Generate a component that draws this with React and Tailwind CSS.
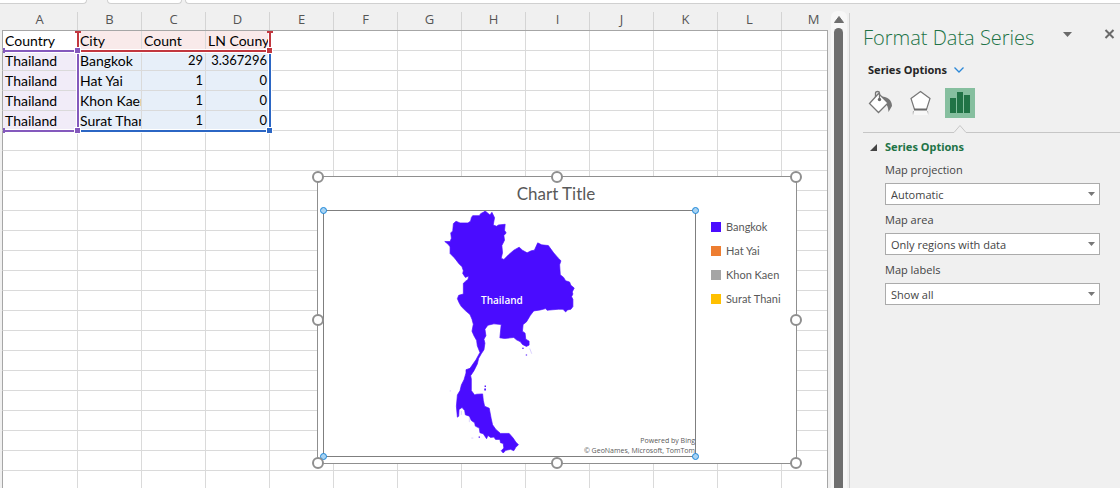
import React, { useState } from 'react';

const COLUMNS = ['A', 'B', 'C', 'D', 'E', 'F', 'G', 'H', 'I', 'J', 'K', 'L', 'M'];
const ROW_COUNT = 23;

const DATA = [
  ['Country', 'City', 'Count', 'LN Counyt'],
  ['Thailand', 'Bangkok', 29, 3.367296],
  ['Thailand', 'Hat Yai', 1, 0],
  ['Thailand', 'Khon Kaen', 1, 0],
  ['Thailand', 'Surat Thani', 1, 0],
];

const LEGEND = [
  { name: 'Bangkok', color: 'bg-[#4a0cff]' },
  { name: 'Hat Yai', color: 'bg-[#ed7d31]' },
  { name: 'Khon Kaen', color: 'bg-[#a5a5a5]' },
  { name: 'Surat Thani', color: 'bg-[#ffc000]' },
];

const FIELDS = [
  { id: 'projection', label: 'Map projection', options: ['Automatic', 'Mercator', 'Miller', 'Robinson'] },
  { id: 'area', label: 'Map area', options: ['Only regions with data', 'Automatic', 'World'] },
  { id: 'labels', label: 'Map labels', options: ['Show all', 'Best fit only', 'None'] },
];

const THAILAND =
  'M150 42 L146 48 126 48 122 54 120 64 112 70 88 70 76 65 68 72 66 94 60 100 62 116 58 126 42 126 52 134 58 142 58 162 72 176 84 192 94 202 98 214 96 222 104 234 114 230 112 240 104 246 98 252 98 284 84 288 80 298 86 312 92 322 104 334 118 346 124 360 128 375 124 396 130 410 138 424 140 440 148 460 136 482 118 508 106 512 106 522 100 542 92 558 88 575 80 588 77 622 80 655 84 652 85 632 94 626 102 635 104 648 116 652 122 665 132 672 134 682 146 688 148 702 158 705 168 720 172 710 180 716 190 715 195 722 208 722 210 732 218 734 220 748 212 756 218 763 226 755 240 752 250 756 256 746 264 738 256 730 248 718 236 704 210 704 196 692 186 678 182 660 176 628 162 622 158 604 156 585 138 586 132 588 122 575 122 540 120 530 130 515 140 495 144 478 152 464 160 452 163 432 160 420 166 410 163 390 172 378 190 374 212 376 208 416 222 418 250 415 258 422 270 428 276 436 288 442 296 438 296 426 286 420 284 402 276 396 278 376 288 368 300 348 310 335 330 332 346 328 350 333 384 330 398 330 406 338 412 332 422 330 428 322 428 300 424 292 428 284 426 278 432 266 422 258 418 248 406 244 400 234 390 226 388 196 392 184 384 176 370 160 354 138 334 136 322 130 312 152 302 154 290 160 276 152 266 143 250 152 234 166 220 180 212 176 216 160 214 138 222 122 220 108 227 100 222 92 224 74 204 76 198 80 188 76 192 54 184 38 178 46 164 34 158 38Z';

function cellColor(row, col) {
  if (row > 4 || col > 3) return 'bg-white';
  if (col === 0) return row === 0 ? 'bg-white' : 'bg-[#f1ecf8]';
  return row === 0 ? 'bg-[#f9eaea]' : 'bg-[#e7eff9]';
}

function SelectedRanges() {
  return (
    <svg className="pointer-events-none absolute left-0 top-[27px]" width="275" height="105" fill="none" aria-hidden="true">
      <g stroke="#fff" strokeWidth="4">
        <path d="M1 20H268M76 0V100M268 0V100M1 100H268" />
      </g>
      <g strokeWidth="2">
        <path d="M76 1V20M268 1V20M76 20H268" stroke="#c2373f" />
        <path d="M76 100H268V20" stroke="#2b66c4" />
        <path d="M1 20H76V100H1" stroke="#8459bd" />
      </g>
      <path d="M73 0h6v2h-6zM265 0h6v2h-6z" fill="#c2373f" />
      <path d="M1 17h2v5H1zM1 97h2v5H1z" fill="#8459bd" />
      <g stroke="#fff">
        <rect x="72.5" y="16.5" width="6" height="6" fill="#8459bd" />
        <rect x="72.5" y="96.5" width="6" height="6" fill="#8459bd" />
        <rect x="264.5" y="16.5" width="6" height="6" fill="#c2373f" />
        <rect x="264.5" y="96.5" width="6" height="6" fill="#2b66c4" />
      </g>
    </svg>
  );
}

function Handle({ className }) {
  return <span className={`absolute h-3 w-3 rounded-full border-2 border-[#8f8f8f] bg-white ${className}`} />;
}

function PlotHandle({ className }) {
  return <span className={`absolute h-[7px] w-[7px] rounded-full border border-[#1a86d9] bg-[#a9d3f2] ${className}`} />;
}

function MapChart() {
  return (
    <div className="absolute left-[315px] top-[172px] h-[288px] w-[480px] border border-[#8f8f8f] bg-white text-[#595959]">
      <h2 className="h-[33px] pr-[2px] pt-[5px] text-center text-[17px] leading-6">Chart Title</h2>
      <div className="flex pl-[5px]">
        <div className="relative h-[247px] w-[373px] border border-[#7f7f7f]">
          <svg className="h-full w-full" viewBox="-321 34 1116 738" fill="#4a0cff" aria-hidden="true">
            <path d={THAILAND} stroke="#4a0cff" strokeWidth="2" strokeLinejoin="round" />
            <path d="M275 446h5v3h-5zM286 466h4v3h-4zM162 560h4v4h-4zM161 569h5v6h-5zM144 713h4v4h-4z" />
            <path d="M298 448l6 16M92 636v12M116 656v14M122 718h6M57 576h4" stroke="#c9bbff" strokeWidth="2" />
          </svg>
          <span className="absolute left-[157px] top-[81px] font-['Open_Sans',sans-serif] text-[10px] font-semibold leading-4 text-white">Thailand</span>
          <p className="absolute bottom-0 right-0 text-right font-['Open_Sans',sans-serif] text-[7px] leading-[10px]">
            Powered by Bing
            <br />© GeoNames, Microsoft, TomTom
          </p>
          <PlotHandle className="-left-1 -top-1" />
          <PlotHandle className="-right-1 -top-1" />
          <PlotHandle className="-bottom-1 -left-1" />
          <PlotHandle className="-bottom-1 -right-1" />
        </div>
        <ul className="pl-[15px] pt-[5px] text-[11px]">
          {LEGEND.map((item) => (
            <li key={item.name} className="flex h-6 items-center gap-[5px]">
              <span className={`h-[10px] w-[10px] ${item.color}`} />
              {item.name}
            </li>
          ))}
        </ul>
      </div>
      <Handle className="-left-[6px] -top-[6px]" />
      <Handle className="-top-[6px] left-[233px]" />
      <Handle className="-right-[6px] -top-[6px]" />
      <Handle className="-left-[6px] top-[137px]" />
      <Handle className="-right-[6px] top-[137px]" />
      <Handle className="-bottom-[6px] -left-[6px]" />
      <Handle className="-bottom-[6px] left-[233px]" />
      <Handle className="-bottom-[6px] -right-[6px]" />
    </div>
  );
}

function Sheet() {
  return (
    <main className="relative min-w-0 flex-1 overflow-hidden">
      <table className="w-[844px] table-fixed border-separate border-spacing-0 text-sm text-black">
        <colgroup>
          {COLUMNS.map((name, i) => (
            <col key={name} className={i === 0 ? 'w-[76px]' : 'w-16'} />
          ))}
        </colgroup>
        <thead>
          <tr>
            {COLUMNS.map((name) => (
              <th key={name} scope="col" className="h-[27px] border-b border-[#a6a6a6] bg-[#f0f0f0] p-0 font-['Open_Sans',sans-serif] text-[13px] font-normal text-[#555]">
                <div className="mt-[8px] h-[18px] border-r border-[#d4d4d4] leading-[15px]">{name}</div>
              </th>
            ))}
          </tr>
        </thead>
        <tbody>
          {Array.from({ length: ROW_COUNT }, (_, row) => (
            <tr key={row}>
              {COLUMNS.map((name, col) => {
                const value = DATA[row]?.[col];
                return (
                  <td
                    key={name}
                    className={`h-5 overflow-hidden whitespace-nowrap border-b border-r border-[#dadada] p-0 pl-[2px] pr-[2px] leading-[19px] first:border-l first:border-l-[#a6a6a6] ${cellColor(row, col)} ${typeof value === 'number' ? 'text-right text-[13px]' : 'text-left'}`}
                  >
                    {value}
                  </td>
                );
              })}
            </tr>
          ))}
        </tbody>
      </table>
      <SelectedRanges />
      <MapChart />
      <div className="absolute bottom-0 right-0 top-[26px] w-px bg-[#a6a6a6]" />
    </main>
  );
}

function ScrollBar() {
  return (
    <div className="flex w-[21px] flex-col items-center pt-[7px]">
      <div className="flex w-4 flex-1 flex-col items-center rounded-t-md bg-[#f7f7f7] pt-[5px]">
        <svg width="10" height="7" viewBox="0 0 10 7" aria-hidden="true">
          <path d="M5 0.5 9.5 6.5H0.5Z" fill="#6e6e6e" stroke="#6e6e6e" strokeLinejoin="round" />
        </svg>
        <div className="mt-[5px] w-[9px] flex-1 rounded-t-full bg-[#6e6e6e]" />
      </div>
    </div>
  );
}

function FillIcon() {
  return (
    <svg width="30" height="30" viewBox="0 0 30 30" fill="none" aria-hidden="true">
      <path d="M17 8.500C22 8.500 27 12 27 18L23.500 24C23.500 19 21 14 17 12Z" fill="#767676" />
      <path d="M13.500 5.500 23 15 13.500 24.500 4.500 15.500Z" fill="#fff" stroke="#767676" strokeWidth="1.300" />
      <path d="M10.500 9V5C10.500 3 14.500 3 14.500 5V10" stroke="#767676" strokeWidth="1.300" />
      <circle cx="14.500" cy="11.500" r="1.700" fill="#666" />
    </svg>
  );
}

function EffectsIcon() {
  return (
    <svg width="30" height="30" viewBox="0 0 30 30" fill="none" aria-hidden="true">
      <defs>
        <linearGradient id="reflection" x1="0" y1="0" x2="0" y2="1">
          <stop offset="0" stopColor="#aaa" />
          <stop offset="1" stopColor="#f0f0f0" />
        </linearGradient>
      </defs>
      <path d="M8.500 23H22.500L23.500 27H7.500Z" fill="#f8f8f8" />
      <path d="M8 23h1v4H7zM22 23h1l1 4h-1z" fill="url(#reflection)" />
      <path d="M15.500 3.500 25 10.500 21.500 21.500H9.500L6 10.500Z" fill="#fff" stroke="#767676" strokeWidth="1.200" />
      <path d="M9 21.500H22" stroke="#6a6a6a" strokeWidth="2" />
    </svg>
  );
}

function SeriesIcon() {
  return (
    <svg width="30" height="30" viewBox="0 0 30 30" fill="#217346" aria-hidden="true">
      <path d="M5 10h6v15H5zM12 4h6v21h-6zM19 7h6v18h-6z" />
    </svg>
  );
}

function FormatPane() {
  const [tab, setTab] = useState('series');
  const [open, setOpen] = useState(true);

  const tabs = [
    { id: 'fill', label: 'Fill & Line', icon: <FillIcon /> },
    { id: 'effects', label: 'Effects', icon: <EffectsIcon /> },
    { id: 'series', label: 'Series Options', icon: <SeriesIcon /> },
  ];

  return (
    <aside className="mt-[9px] w-[271px] shrink-0 border-l border-[#d0d0d0] pl-[13px] pt-[9px] font-['Open_Sans',sans-serif] text-[11px] text-[#444]">
      {/* Title */}
      <div className="flex h-8 items-center pr-[5px]">
        <h1 className="flex-1 text-[20px] font-light text-[#217346]">Format Data Series</h1>
        <button aria-label="Pane options" className="mb-2 mr-8">
          <svg width="9" height="5" viewBox="0 0 9 5" aria-hidden="true"><path d="M0 0h9L4.500 5z" fill="#6a6a6a" /></svg>
        </button>
        <button aria-label="Close" className="mb-2">
          <svg width="11" height="10" viewBox="0 0 11 10" aria-hidden="true">
            <path d="M1.500 1 9.500 9M9.500 1 1.500 9" stroke="#6a6a6a" strokeWidth="2" />
          </svg>
        </button>
      </div>

      <button className="ml-[5px] mt-[6px] flex h-5 items-center gap-[7px] font-['Noto_Sans',sans-serif] font-bold text-[#262626]">
        Series Options
        <svg width="10" height="6" viewBox="0 0 10 6" fill="none" aria-hidden="true"><path d="M0.500 0.500 5 5 9.500 0.500" stroke="#2b88d8" strokeWidth="1.300" /></svg>
      </button>

      {/* Tabs */}
      <div className="ml-[2px] mt-2 flex gap-[10px]">
        {tabs.map((t) => (
          <button key={t.id} aria-label={t.label} onClick={() => setTab(t.id)} className={tab === t.id ? 'bg-[#86bf9f]' : ''}>
            {t.icon}
          </button>
        ))}
      </div>
      <div className="mt-[6px] flex h-[9px]">
        <div className="w-[90px] border-b border-[#c6c6c6]" />
        <svg width="14" height="9" viewBox="0 0 14 9" fill="none" aria-hidden="true"><path d="M0 8.500H1L7 1.500 13 8.500H14" stroke="#c6c6c6" /></svg>
        <div className="flex-1 border-b border-[#c6c6c6]" />
      </div>

      {/* Series options */}
      <button onClick={() => setOpen(!open)} aria-expanded={open} className="ml-[7px] mt-1 flex h-5 items-center gap-2 font-['Noto_Sans',sans-serif] font-bold text-[#217346]">
        <svg width="7" height="7" viewBox="0 0 7 7" aria-hidden="true"><path d="M7 0V7H0z" fill="#444" /></svg>
        Series Options
      </button>
      {open && (
        <div className="mt-[3px] flex flex-col gap-[5px] pl-[22px] pr-5">
          {FIELDS.map((field) => (
            <div key={field.id}>
              <label htmlFor={field.id} className="block h-5 leading-5">{field.label}</label>
              <div className="relative mt-[3px]">
                <select id={field.id} className="block h-[22px] w-full appearance-none border border-[#ababab] bg-white pl-[5px] pr-5 pt-px leading-5">
                  {field.options.map((option) => (
                    <option key={option}>{option}</option>
                  ))}
                </select>
                <svg className="pointer-events-none absolute right-[5px] top-[9px]" width="7" height="4" viewBox="0 0 7 4" aria-hidden="true"><path d="M0 0h7L3.500 4z" fill="#777" /></svg>
              </div>
            </div>
          ))}
        </div>
      )}
    </aside>
  );
}

export default function App() {
  return (
    <div className="flex h-screen flex-col overflow-hidden bg-[#f0f0f0] font-['Lato',sans-serif]">
      {/* Formula bar edge */}
      <div className="flex h-1 shrink-0">
        <div className="w-[87px] rounded-br border-b border-r border-[#d0d0d0] bg-white" />
        <div className="ml-5 w-[75px] rounded-b border-x border-b border-[#d0d0d0] bg-white" />
        <div className="ml-[3px] flex-1 rounded-bl border-b border-l border-[#d0d0d0] bg-white" />
      </div>
      <div className="flex min-h-0 flex-1 pl-[2px]">
        <Sheet />
        <ScrollBar />
        <FormatPane />
      </div>
    </div>
  );
}
